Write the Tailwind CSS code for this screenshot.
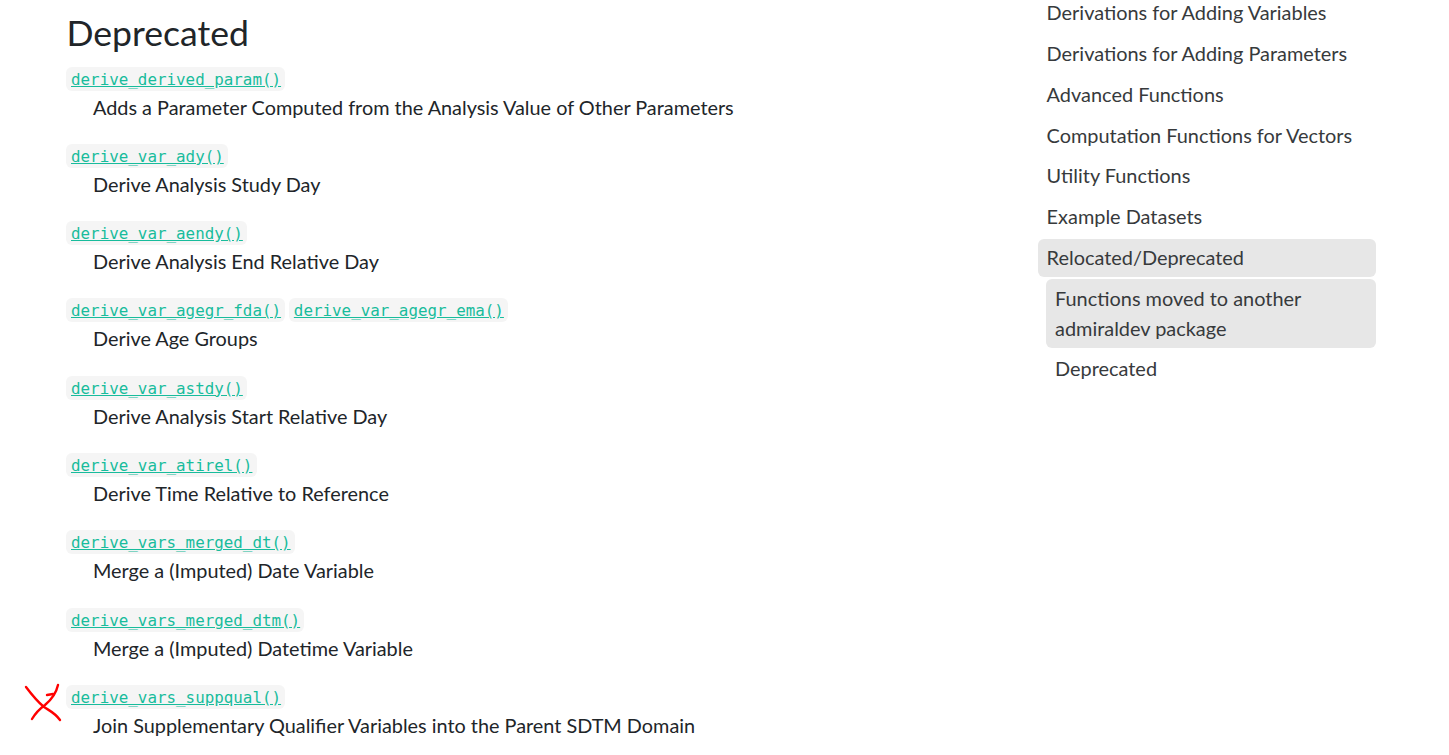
<!DOCTYPE html>
<html lang="en">
<head>
<meta charset="utf-8">
<script src="https://cdn.jsdelivr.net/npm/@tailwindcss/browser@4"></script>
<title>Deprecated</title>
</head>
<body class="bg-white">
<div class="relative h-[755px] w-[1449px] overflow-hidden flex font-['Lato','sans-serif'] text-[#212529] text-[19.85px] leading-[30px]">
  <main class="w-[1038px] pl-[66.5px] pt-[10px]">
    <h2 class="text-[35.6px] leading-[46px] font-normal">Deprecated</h2>
    <dl class="mt-[7.65px] flex flex-col gap-[18.27px]">
      <div class="pb-[1px]">
        <dt class="h-[28px] pt-[3px] -ml-[0.5px] flex gap-[3.6px] items-start"><a class="rounded-[6px] bg-[#f5f5f5] pl-[5px] pr-[4.2px] h-[24px] leading-[26px] font-['DejaVu_Sans_Mono',monospace] text-[15.86px] text-[#18bc9c] underline">derive_derived_param()</a></dt>
        <dd class="pl-[26.5px]">Adds a Parameter Computed from the Analysis Value of Other Parameters</dd>
      </div>
      <div class="pb-[1px]">
        <dt class="h-[28px] pt-[3px] -ml-[0.5px] flex gap-[3.6px] items-start"><a class="rounded-[6px] bg-[#f5f5f5] pl-[5px] pr-[4.2px] h-[24px] leading-[26px] font-['DejaVu_Sans_Mono',monospace] text-[15.86px] text-[#18bc9c] underline">derive_var_ady()</a></dt>
        <dd class="pl-[26.5px]">Derive Analysis Study Day</dd>
      </div>
      <div class="pb-[1px]">
        <dt class="h-[28px] pt-[3px] -ml-[0.5px] flex gap-[3.6px] items-start"><a class="rounded-[6px] bg-[#f5f5f5] pl-[5px] pr-[4.2px] h-[24px] leading-[26px] font-['DejaVu_Sans_Mono',monospace] text-[15.86px] text-[#18bc9c] underline">derive_var_aendy()</a></dt>
        <dd class="pl-[26.5px]">Derive Analysis End Relative Day</dd>
      </div>
      <div class="pb-[1px]">
        <dt class="h-[28px] pt-[3px] -ml-[0.5px] flex gap-[3.6px] items-start"><a class="rounded-[6px] bg-[#f5f5f5] pl-[5px] pr-[4.2px] h-[24px] leading-[26px] font-['DejaVu_Sans_Mono',monospace] text-[15.86px] text-[#18bc9c] underline">derive_var_agegr_fda()</a><a class="rounded-[6px] bg-[#f5f5f5] pl-[5px] pr-[4.2px] h-[24px] leading-[26px] font-['DejaVu_Sans_Mono',monospace] text-[15.86px] text-[#18bc9c] underline">derive_var_agegr_ema()</a></dt>
        <dd class="pl-[26.5px]">Derive Age Groups</dd>
      </div>
      <div class="pb-[1px]">
        <dt class="h-[28px] pt-[3px] -ml-[0.5px] flex gap-[3.6px] items-start"><a class="rounded-[6px] bg-[#f5f5f5] pl-[5px] pr-[4.2px] h-[24px] leading-[26px] font-['DejaVu_Sans_Mono',monospace] text-[15.86px] text-[#18bc9c] underline">derive_var_astdy()</a></dt>
        <dd class="pl-[26.5px]">Derive Analysis Start Relative Day</dd>
      </div>
      <div class="pb-[1px]">
        <dt class="h-[28px] pt-[3px] -ml-[0.5px] flex gap-[3.6px] items-start"><a class="rounded-[6px] bg-[#f5f5f5] pl-[5px] pr-[4.2px] h-[24px] leading-[26px] font-['DejaVu_Sans_Mono',monospace] text-[15.86px] text-[#18bc9c] underline">derive_var_atirel()</a></dt>
        <dd class="pl-[26.5px]">Derive Time Relative to Reference</dd>
      </div>
      <div class="pb-[1px]">
        <dt class="h-[28px] pt-[3px] -ml-[0.5px] flex gap-[3.6px] items-start"><a class="rounded-[6px] bg-[#f5f5f5] pl-[5px] pr-[4.2px] h-[24px] leading-[26px] font-['DejaVu_Sans_Mono',monospace] text-[15.86px] text-[#18bc9c] underline">derive_vars_merged_dt()</a></dt>
        <dd class="pl-[26.5px]">Merge a (Imputed) Date Variable</dd>
      </div>
      <div class="pb-[1px]">
        <dt class="h-[28px] pt-[3px] -ml-[0.5px] flex gap-[3.6px] items-start"><a class="rounded-[6px] bg-[#f5f5f5] pl-[5px] pr-[4.2px] h-[24px] leading-[26px] font-['DejaVu_Sans_Mono',monospace] text-[15.86px] text-[#18bc9c] underline">derive_vars_merged_dtm()</a></dt>
        <dd class="pl-[26.5px]">Merge a (Imputed) Datetime Variable</dd>
      </div>
      <div class="pb-[1px]">
        <dt class="h-[28px] pt-[3px] -ml-[0.5px] flex gap-[3.6px] items-start"><a class="rounded-[6px] bg-[#f5f5f5] pl-[5px] pr-[4.2px] h-[24px] leading-[26px] font-['DejaVu_Sans_Mono',monospace] text-[15.86px] text-[#18bc9c] underline">derive_vars_suppqual()</a></dt>
        <dd class="pl-[26.5px]">Join Supplementary Qualifier Variables into the Parent SDTM Domain</dd>
      </div>
    </dl>
  </main>
  <nav class="w-[338px] -mt-[5.8px] flex flex-col text-[#373a3c] gap-[2.8px] text-[19.92px]">
    <a class="h-[38px] px-[8.6px] leading-[36px] rounded-[6px]">Derivations for Adding Variables</a>
    <a class="h-[38px] px-[8.6px] leading-[36px] rounded-[6px]">Derivations for Adding Parameters</a>
    <a class="h-[38px] px-[8.6px] leading-[36px] rounded-[6px]">Advanced Functions</a>
    <a class="h-[38px] px-[8.6px] leading-[36px] rounded-[6px]">Computation Functions for Vectors</a>
    <a class="h-[38px] px-[8.6px] leading-[36px] rounded-[6px]">Utility Functions</a>
    <a class="h-[38px] px-[8.6px] leading-[36px] rounded-[6px]">Example Datasets</a>
    <a class="h-[38px] px-[8.6px] leading-[36px] rounded-[6px] bg-[#e7e7e7]">Relocated/Deprecated</a>
    <a class="-mt-[0.8px] ml-[8px] px-[9px] pt-[4px] pb-[5px] rounded-[6px] bg-[#e7e7e7]">Functions moved to another admiraldev package</a>
    <a class="-mt-[0.8px] ml-[8px] h-[38px] px-[9px] leading-[36px] rounded-[6px]">Deprecated</a>
  </nav>
  <svg class="absolute left-[24px] top-[682px]" width="38" height="40" viewBox="0 0 38 40" fill="none" stroke="#ff0000" stroke-width="2.4" stroke-linecap="round" stroke-linejoin="round">
    <path d="M2 5 C8 13 14 20 20 25 C26 29 31 31 36 38"/>
    <path d="M34 3 C32 12 27 18 21 23 C14 28 11 32 8 37"/>
    <path d="M23 13 L29 12"/>
  </svg>
</div>
</body>
</html>
